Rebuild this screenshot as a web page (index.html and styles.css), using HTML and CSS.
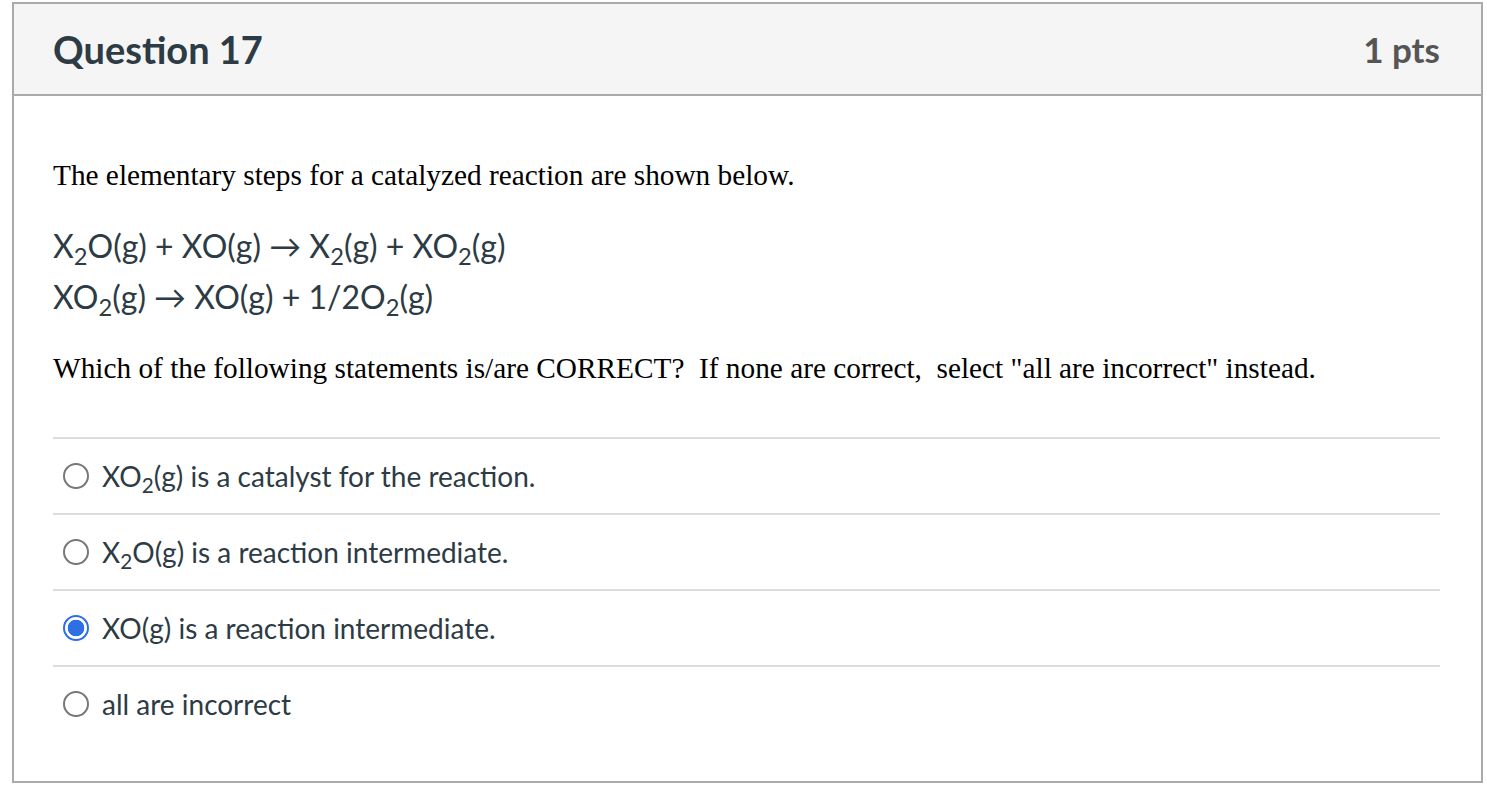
FILE: index.html
```html
<!DOCTYPE html>
<html>
<head>
<meta charset="utf-8">
<link rel="stylesheet" href="styles.css">
</head>
<body>
<div class="question">
  <div class="q-header">
    <h2 class="q-title">Question 17</h2>
    <div class="q-points">1 pts</div>
  </div>
  <div class="q-body">
    <p class="serif-text">The elementary steps for a catalyzed reaction are shown below.</p>
    <div class="equations">
      <div class="eq">X<sub>2</sub>O(g) + XO(g) → X<sub>2</sub>(g) + XO<sub>2</sub>(g)</div>
      <div class="eq">XO<sub>2</sub>(g) → XO(g) + 1/2O<sub>2</sub>(g)</div>
    </div>
    <p class="serif-text">Which of the following statements is/are CORRECT?&nbsp; If none are correct,&nbsp; select "all are incorrect" instead.</p>
    <div class="answers">
      <label class="answer"><span class="radio"></span><span class="answer-text">XO<sub>2</sub>(g) is a catalyst for the reaction.</span></label>
      <label class="answer"><span class="radio"></span><span class="answer-text">X<sub>2</sub>O(g) is a reaction intermediate.</span></label>
      <label class="answer"><span class="radio checked"></span><span class="answer-text">XO(g) is a reaction intermediate.</span></label>
      <label class="answer"><span class="radio"></span><span class="answer-text">all are incorrect</span></label>
    </div>
  </div>
</div>
</body>
</html>
```

FILE: styles.css
```css
html, body {
  margin: 0;
  padding: 0;
  background: #ffffff;
}
body {
  padding: 2px 4px 0 12px;
}
.question {
  border: 2px solid #aaaaaa;
  width: 1471px;
  height: 781px;
  box-sizing: border-box;
  font-family: Lato, "Liberation Sans", sans-serif;
  color: #2d3b45;
}
.q-header {
  display: flex;
  justify-content: space-between;
  align-items: center;
  background: #f5f5f5;
  height: 90px;
  border-bottom: 2px solid #aaaaaa;
  padding: 0 41px 0 39px;
}
.q-title {
  margin: 0;
  font-size: 38px;
  font-weight: 700;
  color: #2d3b45;
}
.q-points {
  font-size: 35px;
  font-weight: 700;
  color: #555555;
}
.q-body {
  padding: 59px 41px 0 39px;
}
.serif-text {
  margin: 0;
  font-family: "Liberation Serif", "Times New Roman", serif;
  font-size: 29.3px;
  line-height: 40px;
  color: #000000;
}
.equations {
  margin: 25px 0 26px;
  font-size: 32px;
  line-height: 51px;
}
.eq {
  height: 51px;
}
sub {
  font-size: 0.74em;
  vertical-align: -0.28em;
  line-height: 0;
}
.answers {
  margin-top: 49px;
}
.answer {
  display: flex;
  align-items: center;
  height: 74px;
  border-top: 2px solid #dddddd;
  padding-left: 10px;
  font-size: 28px;
}
.radio {
  width: 26px;
  height: 26px;
  box-sizing: border-box;
  border: 2px solid #777777;
  border-radius: 50%;
  margin-right: 13px;
  flex: none;
}
.radio.checked {
  border: 2.5px solid #2f6fe4;
  background: radial-gradient(circle, #2f6fe4 0 8px, #ffffff 8.6px);
}
```
